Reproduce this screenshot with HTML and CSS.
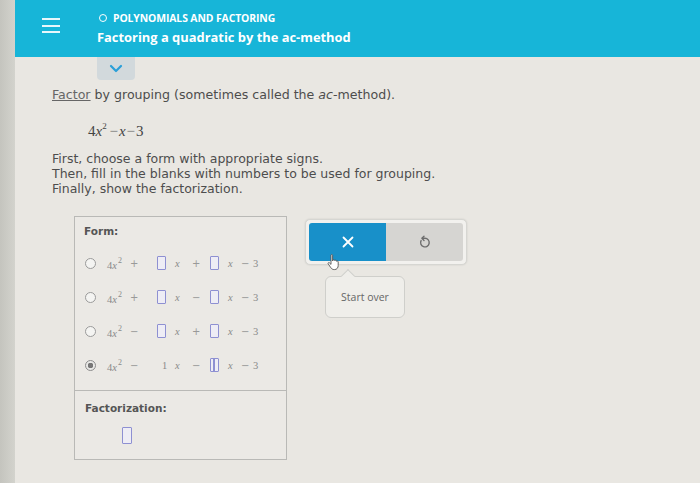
FILE: index.html
```html
<!DOCTYPE html>
<html lang="en">

<head>
  <meta charset="UTF-8">
  <meta name="viewport" content="width=device-width, initial-scale=1.0">
  <title>Factoring a quadratic by the ac-method</title>
  <link rel="stylesheet" href="styles.css">
</head>

<body>
  <div class="screen">
    <div class="bezel"></div>
    <div class="page">
      <header class="topbar">
        <div class="menu">
          <span></span><span></span><span></span>
        </div>
        <div class="titles">
          <p class="topic"><span class="ring"></span>POLYNOMIALS AND FACTORING</p>
          <h1>Factoring a quadratic by the ac-method</h1>
        </div>
      </header>

      <div class="tab">
        <svg width="14" height="9" viewBox="0 0 14 9"><path d="M2 2 L7 7 L12 2" fill="none" stroke="#2a9fd8" stroke-width="2.2" stroke-linecap="round" stroke-linejoin="round"/></svg>
      </div>

      <div class="content">
        <p class="lead"><span class="link">Factor</span> by grouping (sometimes called the <i>ac</i>-method).</p>
        <p class="expr">4<i>x</i><sup>2</sup> <span class="op">&minus;</span><i>x</i><span class="op">&minus;</span>3</p>
        <p class="steps">First, choose a form with appropriate signs.<br>
          Then, fill in the blanks with numbers to be used for grouping.<br>
          Finally, show the factorization.</p>

        <div class="work">
          <div class="answer">
            <div class="formPart">
              <p class="label">Form:</p>
              <div class="row">
                <span class="radio"></span>
                <span class="term">4<i>x</i><sup>2</sup></span>
                <span class="sign">+</span>
                <span class="cell"><span class="blank"></span></span>
                <span class="var">x</span>
                <span class="sign">+</span>
                <span class="cell"><span class="blank"></span></span>
                <span class="var">x</span>
                <span class="sign">&minus;</span>
                <span class="num">3</span>
              </div>
              <div class="row">
                <span class="radio"></span>
                <span class="term">4<i>x</i><sup>2</sup></span>
                <span class="sign">+</span>
                <span class="cell"><span class="blank"></span></span>
                <span class="var">x</span>
                <span class="sign">&minus;</span>
                <span class="cell"><span class="blank"></span></span>
                <span class="var">x</span>
                <span class="sign">&minus;</span>
                <span class="num">3</span>
              </div>
              <div class="row">
                <span class="radio"></span>
                <span class="term">4<i>x</i><sup>2</sup></span>
                <span class="sign">&minus;</span>
                <span class="cell"><span class="blank"></span></span>
                <span class="var">x</span>
                <span class="sign">+</span>
                <span class="cell"><span class="blank"></span></span>
                <span class="var">x</span>
                <span class="sign">&minus;</span>
                <span class="num">3</span>
              </div>
              <div class="row">
                <span class="radio checked"></span>
                <span class="term">4<i>x</i><sup>2</sup></span>
                <span class="sign">&minus;</span>
                <span class="cell"><span class="num">1</span></span>
                <span class="var">x</span>
                <span class="sign">&minus;</span>
                <span class="cell"><span class="blank active"></span></span>
                <span class="var">x</span>
                <span class="sign">&minus;</span>
                <span class="num">3</span>
              </div>
            </div>
            <div class="factPart">
              <p class="label">Factorization:</p>
              <span class="blank big"></span>
            </div>
          </div>

          <div class="tools">
            <div class="btnGroup">
              <button class="btn clear">
                <svg width="12" height="12" viewBox="0 0 12 12"><path d="M1.5 1.5 L10.5 10.5 M10.5 1.5 L1.5 10.5" stroke="#fff" stroke-width="1.8" stroke-linecap="round"/></svg>
              </button>
              <button class="btn reset">
                <svg width="13" height="14" viewBox="0 0 13 14"><path d="M4.5 3.3 L7 3.3 A4.3 4.3 0 1 1 3.1 5.6" fill="none" stroke="#6d6d6d" stroke-width="1.4" stroke-linecap="round"/><path d="M6 1.2 L3.9 3.3 L6 5.4" fill="none" stroke="#6d6d6d" stroke-width="1.4" stroke-linecap="round" stroke-linejoin="round"/></svg>
              </button>
            </div>
            <div class="tip">Start over</div>
            <svg class="cursor" width="14" height="17" viewBox="0 0 14 17"><path d="M4 1.2 C4 0.4 5.6 0.4 5.6 1.2 L5.6 7 L6 6.2 C6.2 5.4 7.6 5.5 7.6 6.4 L7.8 6.6 C8 5.9 9.4 6 9.4 6.9 L9.6 7.3 C9.9 6.7 11.2 6.9 11.2 7.8 L11.2 11.5 C11.2 13.6 10 15.6 7.4 15.6 C5.6 15.6 4.6 14.8 3.6 13.4 L1.2 9.8 C0.7 9 1.6 8.2 2.4 8.8 L4 10.4 Z" fill="#fff" stroke="#555" stroke-width="0.9" stroke-linejoin="round"/></svg>
          </div>
        </div>
      </div>
    </div>
  </div>
</body>

</html>
```

FILE: styles.css
```css
body {
  margin: 0;
  font-family: 'DejaVu Sans', Verdana, sans-serif;
  background-color: #e9e7e2;
}

p {
  margin: 0;
}

.screen {
  display: flex;
  height: 483px;
  overflow: hidden;
}

.bezel {
  width: 15px;
  flex-shrink: 0;
  background: linear-gradient(to right, #c4c4be, #d3d3cd);
}

.page {
  flex: 1;
  background-color: #e9e7e2;
}

.topbar {
  height: 57px;
  background-color: #17b5d8;
  display: flex;
  align-items: flex-start;
  color: white;
}

.menu {
  width: 18px;
  margin: 18px 0 0 27px;
  display: flex;
  flex-direction: column;
  gap: 4.5px;
}
.menu span {
  display: block;
  height: 2px;
  background-color: #e8f7fb;
}

.titles {
  margin: 11px 0 0 37px;
  font-family: 'Open Sans', sans-serif;
}

.topic {
  font-size: 10.4px;
  font-weight: 700;
  letter-spacing: -0.1px;
  line-height: 14px;
  display: flex;
  align-items: center;
}
.ring {
  width: 6px;
  height: 6px;
  border: 1.3px solid white;
  border-radius: 50%;
  margin: 0 6px 0 2px;
}

h1 {
  margin: 3px 0 0 0;
  font-size: 12.9px;
  font-weight: 700;
  line-height: 18px;
}

.tab {
  width: 38px;
  height: 23px;
  margin-left: 82px;
  background-color: #d2d9dc;
  border-radius: 0 0 4px 4px;
  display: flex;
  align-items: center;
  justify-content: center;
}

.content {
  padding: 6px 0 0 37px;
  color: #4d4d4d;
}

.lead {
  font-size: 12.6px;
  line-height: 17px;
}
.link {
  text-decoration: underline;
  color: #666;
}

.expr {
  margin: 13px 0 0 36px;
  font-family: 'Liberation Serif', serif;
  font-size: 15px;
  color: #444;
  line-height: 20px;
}
.expr sup {
  font-size: 9px;
  vertical-align: 7px;
  margin-right: -2px;
}
.expr .op {
  color: #777;
  margin: 0 1px;
}

.steps {
  margin-top: 10px;
  font-size: 12.5px;
  line-height: 15px;
}

.work {
  display: flex;
  margin: 20px 0 0 22px;
  gap: 18px;
}

.answer {
  width: 211px;
  border: 1px solid #b9b9b6;
  background-color: #ebe9e5;
}

.formPart {
  height: 174px;
  padding: 7px 0 0 9px;
  border-bottom: 1px solid #b9b9b6;
  box-sizing: border-box;
}

.label {
  font-size: 10.5px;
  font-weight: bold;
  color: #555;
  line-height: 14px;
}

.row {
  display: grid;
  grid-template-columns: 23px 22px 28px 16px 18px 19px 16px 14px 13px auto;
  align-items: center;
  height: 34px;
  font-family: 'Liberation Serif', serif;
  font-size: 10.5px;
  color: #8a8a8a;
}
.formPart .label {
  margin-bottom: 8px;
}

.radio {
  width: 9px;
  height: 9px;
  border: 1px solid #9a9a9a;
  border-radius: 50%;
  background-color: #f4f4f2;
  margin-left: 1px;
}
.radio.checked {
  background: radial-gradient(circle, #777 0 2.6px, #e8e8e6 3px);
  border-color: #8d8d8d;
}

.term sup {
  font-size: 8px;
  vertical-align: 6px;
  margin-left: 1px;
}
.sign {
  font-family: 'DejaVu Sans', sans-serif;
  font-size: 10px;
  color: #999;
  padding-left: 1px;
}
.var {
  font-style: italic;
  padding-left: 2px;
}
.cell .num {
  padding-left: 5px;
}

.blank {
  display: block;
  width: 7px;
  height: 12px;
  border: 1.5px solid #8e90d2;
  background-color: #eeedf5;
  border-radius: 1px;
}
.blank.active {
  background: linear-gradient(to right, #eeedf5 0 2.5px, #8e90d2 2.5px 4px, #eeedf5 4px);
}

.factPart {
  height: 68px;
  padding: 10px 0 0 10px;
  box-sizing: border-box;
}
.blank.big {
  margin: 12px 0 0 37px;
  width: 8px;
  height: 15px;
}

.tools {
  position: relative;
  padding-top: 3px;
}

.btnGroup {
  display: flex;
  padding: 3px;
  border: 1px solid #d6d6d2;
  border-radius: 5px;
  background-color: #f2f1ee;
  box-shadow: 0 0 2px rgba(0, 0, 0, 0.12);
}

.btn {
  width: 77px;
  height: 38px;
  border: none;
  display: flex;
  align-items: center;
  justify-content: center;
}
.btn.clear {
  background-color: #1890c9;
  border-radius: 3px 0 0 3px;
}
.btn.reset {
  background-color: #d6d5d2;
  border-radius: 0 3px 3px 0;
}

.tip {
  position: absolute;
  left: 20px;
  top: 60px;
  width: 80px;
  height: 42px;
  box-sizing: border-box;
  border: 1px solid #cfcfcb;
  border-radius: 6px;
  background-color: #efeeea;
  font-family: 'Open Sans', sans-serif;
  font-size: 10.5px;
  color: #666;
  display: flex;
  align-items: center;
  justify-content: center;
}
.tip::before {
  content: '';
  position: absolute;
  left: 17px;
  top: -6px;
  width: 9px;
  height: 9px;
  background-color: #efeeea;
  border-left: 1px solid #cfcfcb;
  border-top: 1px solid #cfcfcb;
  transform: rotate(45deg);
}

.cursor {
  position: absolute;
  left: 22px;
  top: 38px;
}
```
